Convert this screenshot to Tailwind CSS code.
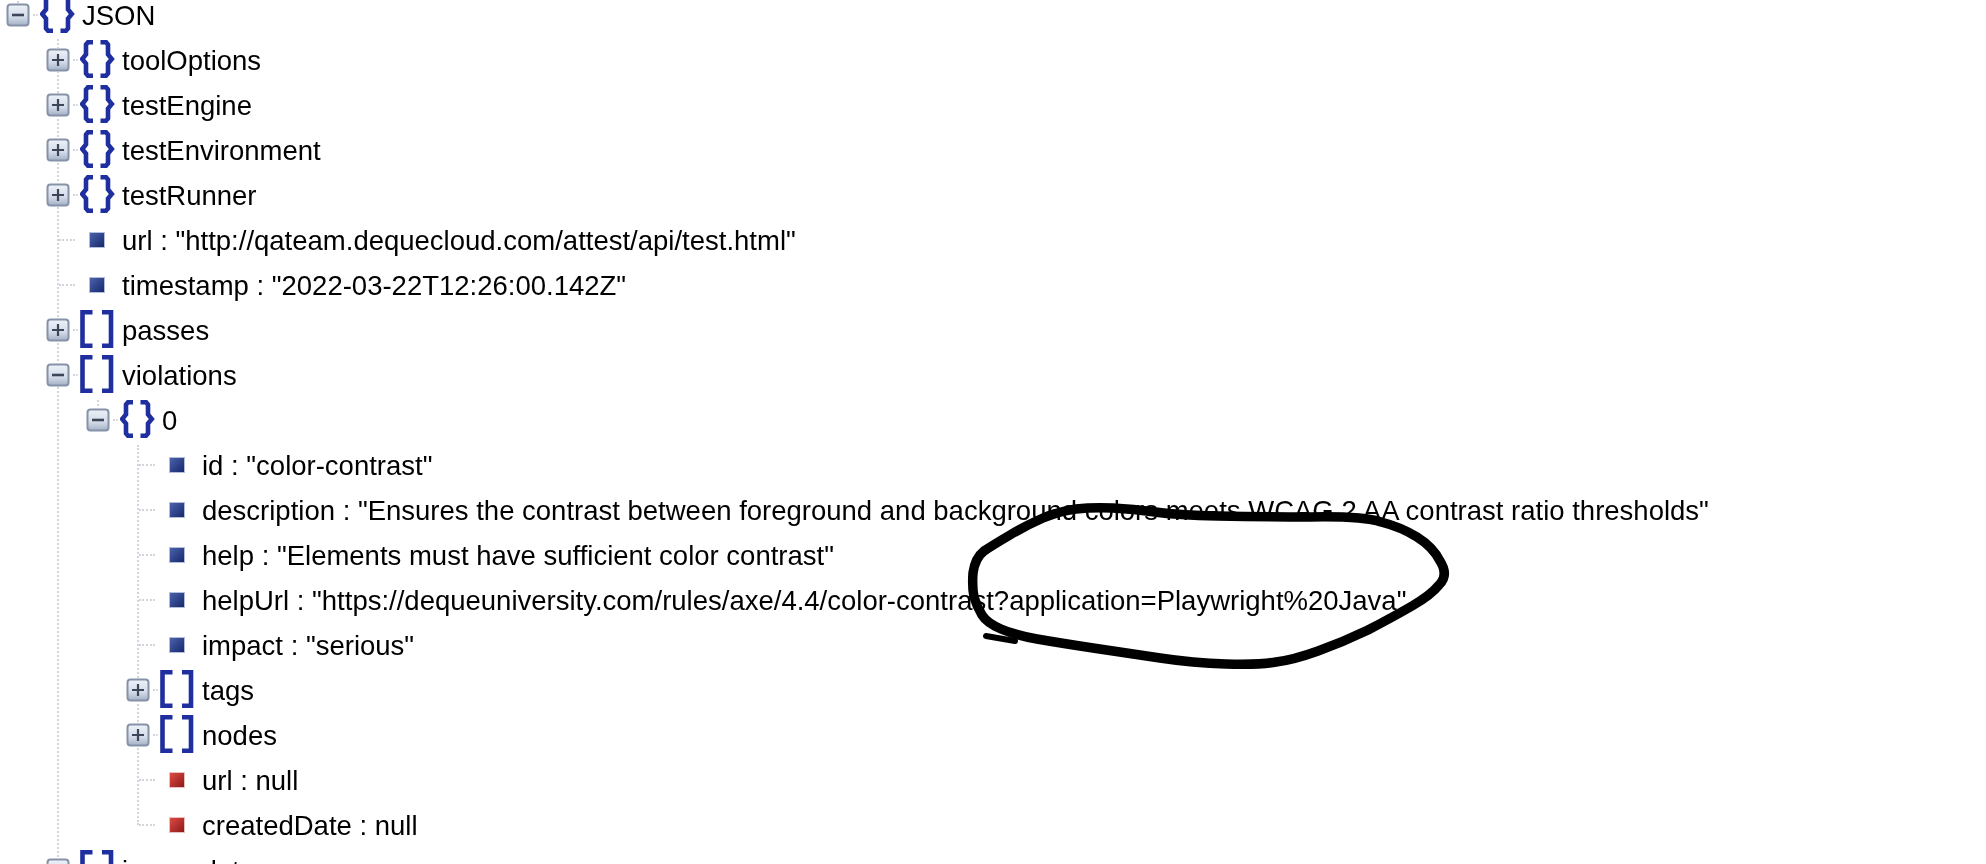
<!DOCTYPE html>
<html lang="en">
<head>
<meta charset="UTF-8">
<title>JSON viewer</title>
<script src="https://cdn.jsdelivr.net/npm/@tailwindcss/browser@4"></script>
</head>
<body class="relative bg-white h-screen overflow-hidden font-['Liberation_Sans',Arial,sans-serif] text-black text-[27.5px] leading-[47px]">
<svg width="0" height="0" class="absolute">
  <defs>
    <linearGradient id="btn" x1="0" y1="0" x2="0" y2="1"><stop offset="0" stop-color="#eef2f8"/><stop offset=".6" stop-color="#d3dbe8"/><stop offset="1" stop-color="#a3b0c6"/></linearGradient>
    <symbol id="plus" viewBox="0 0 24 24"><rect x="1.5" y="1.5" width="21" height="21" rx="3" fill="url(#btn)" stroke="#8592a8" stroke-width="2"/><path d="M6 12h12M12 6v12" stroke="#3c4658" stroke-width="2.2"/></symbol>
    <symbol id="minus" viewBox="0 0 24 24"><rect x="1.5" y="1.5" width="21" height="21" rx="3" fill="url(#btn)" stroke="#8592a8" stroke-width="2"/><path d="M6 12h12" stroke="#3c4658" stroke-width="2.6"/></symbol>
    <symbol id="obj" viewBox="0 0 36 40"><path d="M13 2.2H8L6 4.5V14.5L2.2 19L6 23.5V33.5L8 35.8H13M20.5 2.2H26L28 4.5V14.5L31.8 19L28 23.5V33.5L26 35.8H20.5" fill="none" stroke="#1f2f9f" stroke-width="4.6"/></symbol>
    <symbol id="arr" viewBox="0 0 36 40"><path d="M12.5 2.2H2.5V35.8H12.5M22 2.2H31V35.8H22" fill="none" stroke="#1f2f9f" stroke-width="4.6"/></symbol>
  </defs>
</svg>

<div class="relative -mt-[7.5px] blur-[0.4px]">
  <!-- dotted guides -->
  <div class="absolute left-[17px] top-0 h-[10px] border-l-2 border-dotted border-gray-300"></div>
  <div class="absolute left-[57px] top-[46px] h-[830px] border-l-2 border-dotted border-gray-300"></div>
  <div class="absolute left-[97px] top-[407px] h-[10px] border-l-2 border-dotted border-gray-300"></div>
  <div class="absolute left-[137px] top-[452px] h-[380px] border-l-2 border-dotted border-gray-300"></div>

  <div class="relative">
    <!-- root -->
    <div class="flex items-center h-[45px]">
      <div class="w-10 flex items-center shrink-0"><svg class="w-6 h-6 ml-[6px]"><use href="#minus"/></svg><span class="w-[5px] ml-[3px] border-t-2 border-dotted border-gray-300"></span></div>
      <svg class="w-[36px] h-[40px] mr-[6px] shrink-0"><use href="#obj"/></svg><span>JSON</span>
    </div>

    <!-- depth 1 -->
    <div class="flex flex-col pl-10">
      <div class="flex items-center h-[45px]"><div class="w-10 flex items-center shrink-0"><svg class="w-6 h-6 ml-[6px] bg-white"><use href="#plus"/></svg><span class="w-[5px] ml-[3px] border-t-2 border-dotted border-gray-300"></span></div><svg class="w-[36px] h-[40px] mr-[6px] shrink-0"><use href="#obj"/></svg><span>toolOptions</span></div>
      <div class="flex items-center h-[45px]"><div class="w-10 flex items-center shrink-0"><svg class="w-6 h-6 ml-[6px] bg-white"><use href="#plus"/></svg><span class="w-[5px] ml-[3px] border-t-2 border-dotted border-gray-300"></span></div><svg class="w-[36px] h-[40px] mr-[6px] shrink-0"><use href="#obj"/></svg><span>testEngine</span></div>
      <div class="flex items-center h-[45px]"><div class="w-10 flex items-center shrink-0"><svg class="w-6 h-6 ml-[6px] bg-white"><use href="#plus"/></svg><span class="w-[5px] ml-[3px] border-t-2 border-dotted border-gray-300"></span></div><svg class="w-[36px] h-[40px] mr-[6px] shrink-0"><use href="#obj"/></svg><span>testEnvironment</span></div>
      <div class="flex items-center h-[45px]"><div class="w-10 flex items-center shrink-0"><svg class="w-6 h-6 ml-[6px] bg-white"><use href="#plus"/></svg><span class="w-[5px] ml-[3px] border-t-2 border-dotted border-gray-300"></span></div><svg class="w-[36px] h-[40px] mr-[6px] shrink-0"><use href="#obj"/></svg><span>testRunner</span></div>
      <div class="flex items-center h-[45px]"><div class="w-10 pl-[19px] shrink-0"><span class="block w-4 border-t-2 border-dotted border-gray-300"></span></div><div class="w-[42px] pl-[9px] shrink-0"><div class="w-4 h-4 bg-[linear-gradient(135deg,#4a62ac,#18286c)] border border-[#b4bed8]"></div></div><span class="whitespace-nowrap">url : "http://qateam.dequecloud.com/attest/api/test.html"</span></div>
      <div class="flex items-center h-[45px]"><div class="w-10 pl-[19px] shrink-0"><span class="block w-4 border-t-2 border-dotted border-gray-300"></span></div><div class="w-[42px] pl-[9px] shrink-0"><div class="w-4 h-4 bg-[linear-gradient(135deg,#4a62ac,#18286c)] border border-[#b4bed8]"></div></div><span class="whitespace-nowrap">timestamp : "2022-03-22T12:26:00.142Z"</span></div>
      <div class="flex items-center h-[45px]"><div class="w-10 flex items-center shrink-0"><svg class="w-6 h-6 ml-[6px] bg-white"><use href="#plus"/></svg><span class="w-[5px] ml-[3px] border-t-2 border-dotted border-gray-300"></span></div><svg class="w-[36px] h-[40px] mr-[6px] shrink-0"><use href="#arr"/></svg><span>passes</span></div>
      <div class="flex items-center h-[45px]"><div class="w-10 flex items-center shrink-0"><svg class="w-6 h-6 ml-[6px] bg-white"><use href="#minus"/></svg><span class="w-[5px] ml-[3px] border-t-2 border-dotted border-gray-300"></span></div><svg class="w-[36px] h-[40px] mr-[6px] shrink-0"><use href="#arr"/></svg><span>violations</span></div>

      <!-- violations[0] -->
      <div class="flex flex-col pl-10">
        <div class="flex items-center h-[45px]"><div class="w-10 flex items-center shrink-0"><svg class="w-6 h-6 ml-[6px] bg-white"><use href="#minus"/></svg><span class="w-[5px] ml-[3px] border-t-2 border-dotted border-gray-300"></span></div><svg class="w-[36px] h-[40px] mr-[6px] shrink-0"><use href="#obj"/></svg><span>0</span></div>
        <div class="flex flex-col pl-10">
          <div class="flex items-center h-[45px]"><div class="w-10 pl-[19px] shrink-0"><span class="block w-4 border-t-2 border-dotted border-gray-300"></span></div><div class="w-[42px] pl-[9px] shrink-0"><div class="w-4 h-4 bg-[linear-gradient(135deg,#4a62ac,#18286c)] border border-[#b4bed8]"></div></div><span class="whitespace-nowrap">id : "color-contrast"</span></div>
          <div class="flex items-center h-[45px]"><div class="w-10 pl-[19px] shrink-0"><span class="block w-4 border-t-2 border-dotted border-gray-300"></span></div><div class="w-[42px] pl-[9px] shrink-0"><div class="w-4 h-4 bg-[linear-gradient(135deg,#4a62ac,#18286c)] border border-[#b4bed8]"></div></div><span class="whitespace-nowrap">description : "Ensures the contrast between foreground and background colors meets WCAG 2 AA contrast ratio thresholds"</span></div>
          <div class="flex items-center h-[45px]"><div class="w-10 pl-[19px] shrink-0"><span class="block w-4 border-t-2 border-dotted border-gray-300"></span></div><div class="w-[42px] pl-[9px] shrink-0"><div class="w-4 h-4 bg-[linear-gradient(135deg,#4a62ac,#18286c)] border border-[#b4bed8]"></div></div><span class="whitespace-nowrap">help : "Elements must have sufficient color contrast"</span></div>
          <div class="flex items-center h-[45px]"><div class="w-10 pl-[19px] shrink-0"><span class="block w-4 border-t-2 border-dotted border-gray-300"></span></div><div class="w-[42px] pl-[9px] shrink-0"><div class="w-4 h-4 bg-[linear-gradient(135deg,#4a62ac,#18286c)] border border-[#b4bed8]"></div></div><span class="whitespace-nowrap">helpUrl : "https://dequeuniversity.com/rules/axe/4.4/color-contrast?application=Playwright%20Java"</span></div>
          <div class="flex items-center h-[45px]"><div class="w-10 pl-[19px] shrink-0"><span class="block w-4 border-t-2 border-dotted border-gray-300"></span></div><div class="w-[42px] pl-[9px] shrink-0"><div class="w-4 h-4 bg-[linear-gradient(135deg,#4a62ac,#18286c)] border border-[#b4bed8]"></div></div><span class="whitespace-nowrap">impact : "serious"</span></div>
          <div class="flex items-center h-[45px]"><div class="w-10 flex items-center shrink-0"><svg class="w-6 h-6 ml-[6px] bg-white"><use href="#plus"/></svg><span class="w-[5px] ml-[3px] border-t-2 border-dotted border-gray-300"></span></div><svg class="w-[36px] h-[40px] mr-[6px] shrink-0"><use href="#arr"/></svg><span>tags</span></div>
          <div class="flex items-center h-[45px]"><div class="w-10 flex items-center shrink-0"><svg class="w-6 h-6 ml-[6px] bg-white"><use href="#plus"/></svg><span class="w-[5px] ml-[3px] border-t-2 border-dotted border-gray-300"></span></div><svg class="w-[36px] h-[40px] mr-[6px] shrink-0"><use href="#arr"/></svg><span>nodes</span></div>
          <div class="flex items-center h-[45px]"><div class="w-10 pl-[19px] shrink-0"><span class="block w-4 border-t-2 border-dotted border-gray-300"></span></div><div class="w-[42px] pl-[9px] shrink-0"><div class="w-4 h-4 bg-[linear-gradient(135deg,#de4a44,#8e1a18)] border border-[#e8c0c0]"></div></div><span class="whitespace-nowrap">url : null</span></div>
          <div class="flex items-center h-[45px]"><div class="w-10 pl-[19px] shrink-0"><span class="block w-4 border-t-2 border-dotted border-gray-300"></span></div><div class="w-[42px] pl-[9px] shrink-0"><div class="w-4 h-4 bg-[linear-gradient(135deg,#de4a44,#8e1a18)] border border-[#e8c0c0]"></div></div><span class="whitespace-nowrap">createdDate : null</span></div>
        </div>
      </div>

      <div class="flex items-center h-[45px]"><div class="w-10 flex items-center shrink-0"><svg class="w-6 h-6 ml-[6px] bg-white"><use href="#plus"/></svg><span class="w-[5px] ml-[3px] border-t-2 border-dotted border-gray-300"></span></div><svg class="w-[36px] h-[40px] mr-[6px] shrink-0"><use href="#arr"/></svg><span>incomplete</span></div>
    </div>
  </div>
</div>

<!-- hand drawn circle over the screenshot -->
<svg class="absolute inset-0 w-full h-full pointer-events-none" viewBox="0 0 1986 864">
  <path d="M973 573Q975 558 984 551Q993 545 1010 535Q1027 525 1043 518Q1060 511 1076 509Q1093 507 1113 508Q1133 509 1155 512Q1177 515 1218 516Q1260 517 1310 517Q1362 516 1381 522Q1401 527 1417 537Q1433 547 1440 561Q1449 575 1439 585Q1431 595 1412 606Q1393 617 1368 630Q1343 642 1318 651Q1293 660 1276 662Q1260 665 1226 664Q1193 663 1160 658Q1127 653 1093 648Q1060 643 1037 639Q1015 635 1001 629Q987 623 982 615Q977 607 974 597Q972 587 973 573Z" fill="none" stroke="#000" stroke-width="9.5" stroke-linejoin="round"/>
  <path d="M986 636L1015 641" fill="none" stroke="#000" stroke-width="6" stroke-linecap="round"/>
</svg>
</body>
</html>
